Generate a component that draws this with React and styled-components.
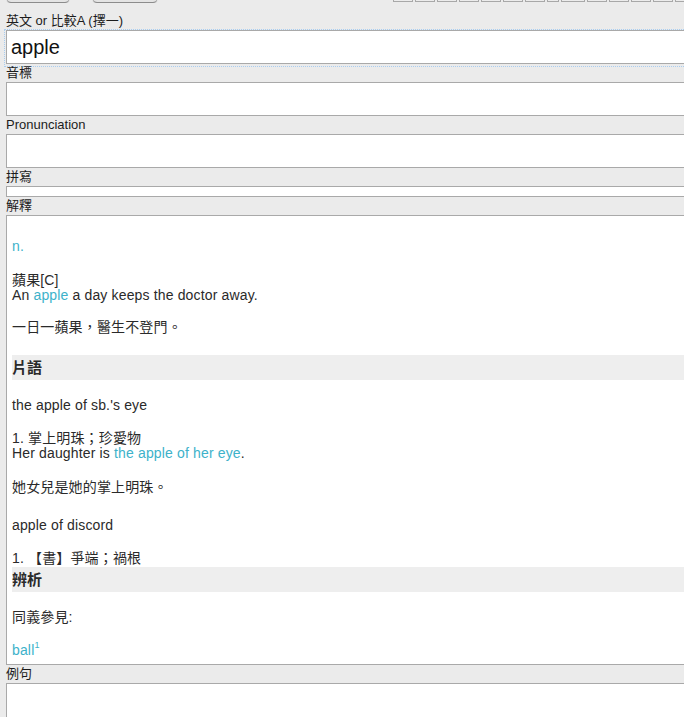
import React from 'react';
import styled, { createGlobalStyle } from 'styled-components';

const GlobalStyle = createGlobalStyle`
    html, body {
        margin: 0;
        padding: 0;
        background: #ebebeb;
        overflow: hidden;
    }
    body {
        font-family: "Liberation Sans", "Noto Sans CJK TC", sans-serif;
        color: #222;
    }
`;

const toolBoxes = [20, 20, 20, 20, 20, 20, 20, 12, 24, 20, 20, 20, 20, 20];

const App = () => {
    return (
        <>
            <GlobalStyle />
            <Page>
                <Toolbar>
                    <PushButton $width={62} />
                    <PushButton $width={64} $gap={24} />
                    <BoxGroup>
                        {toolBoxes.map((w, i) => (
                            <ToolBox key={i} $width={w} />
                        ))}
                    </BoxGroup>
                </Toolbar>

                <Label>英文 or 比較A (擇一)</Label>
                <FocusRing>
                    <Field $height={34} $big>apple</Field>
                </FocusRing>

                <Label>音標</Label>
                <Field $height={34} />

                <Label>Pronunciation</Label>
                <Field $height={34} />

                <Label>拼寫</Label>
                <Field $height={11} />

                <Label>解釋</Label>
                <Field $height={450}>
                    <Content>
                        <Line $top={0}><Link>n.</Link></Line>
                        <Line $top={19}>蘋果[C]</Line>
                        <Line>An <Link>apple</Link> a day keeps the doctor away.</Line>
                        <Line $top={17}>一日一蘋果，醫生不登門。</Line>

                        <Band $top={20}>片語</Band>
                        <Line $top={18}>the apple of sb.'s eye</Line>
                        <Line $top={18}>1. 掌上明珠；珍愛物</Line>
                        <Line>Her daughter is <Link>the apple of her eye</Link>.</Line>
                        <Line $top={19}>她女兒是她的掌上明珠。</Line>
                        <Line $top={23}>apple of discord</Line>
                        <Line $top={18}>1. 【書】爭端；禍根</Line>

                        <Band $top={1}>辨析</Band>
                        <Line $top={18}>同義參見:</Line>
                        <Line $top={18}><Link>ball<sup>1</sup></Link></Line>
                    </Content>
                </Field>

                <Label>例句</Label>
                <Field $height={40} />
            </Page>
        </>
    );
};

const Page = styled.div`
    padding-left: 6px;
`;

const Toolbar = styled.div`
    display: flex;
    align-items: flex-end;
    height: 3px;
    overflow: hidden;
    margin-left: -6px;
    margin-bottom: 9px;
`;

const PushButton = styled.div`
    flex: none;
    width: ${(p) => p.$width}px;
    height: 20px;
    margin-left: ${(p) => p.$gap || 7}px;
    margin-bottom: 1px;
    border-radius: 4px;
    background: #e4e4e4;
    box-shadow: 0 1px 1px rgba(0, 0, 0, 0.45);
`;

const BoxGroup = styled.div`
    display: flex;
    gap: 2px;
    margin-left: 236px;
    flex: none;
`;

const ToolBox = styled.div`
    flex: none;
    width: ${(p) => p.$width}px;
    height: 20px;
    margin-bottom: 1px;
    box-sizing: border-box;
    border: 1px solid #a8a8a8;
    background: #ececec;
`;

const Label = styled.div`
    font-size: 13px;
    line-height: 15px;
    padding: 1px 0 2px;
    color: #1c1c1c;
`;

const FocusRing = styled.div`
    border: 1px dotted #a9cdf0;
    border-right: none;
    margin: -1px 0 -3px -2px;
    padding: 0 0 2px 1px;
`;

const Field = styled.div`
    box-sizing: border-box;
    height: ${(p) => p.$height}px;
    border: 1px solid #a9a9a9;
    border-right: none;
    background: #fff;
    overflow: hidden;
    font-size: ${(p) => (p.$big ? '20px' : '14px')};
    line-height: ${(p) => (p.$big ? '32px' : '15px')};
    padding-left: ${(p) => (p.$big ? '4px' : '0')};
    color: #111;
`;

const Content = styled.div`
    padding: 23px 0 6px 5px;
    color: #2a2a2a;
`;

const Line = styled.div`
    font-size: 14px;
    line-height: 15px;
    letter-spacing: 0.15px;
    margin-top: ${(p) => p.$top || 0}px;
    white-space: nowrap;
`;

const Link = styled.span`
    color: #3db2ca;

    sup {
        font-size: 9px;
        line-height: 0;
        vertical-align: 7px;
    }
`;

const Band = styled.div`
    margin-top: ${(p) => p.$top}px;
    height: 25px;
    line-height: 25px;
    background: #eeeeee;
    font-size: 15px;
    font-weight: bold;
    color: #2a2a2a;
`;

export default App;
